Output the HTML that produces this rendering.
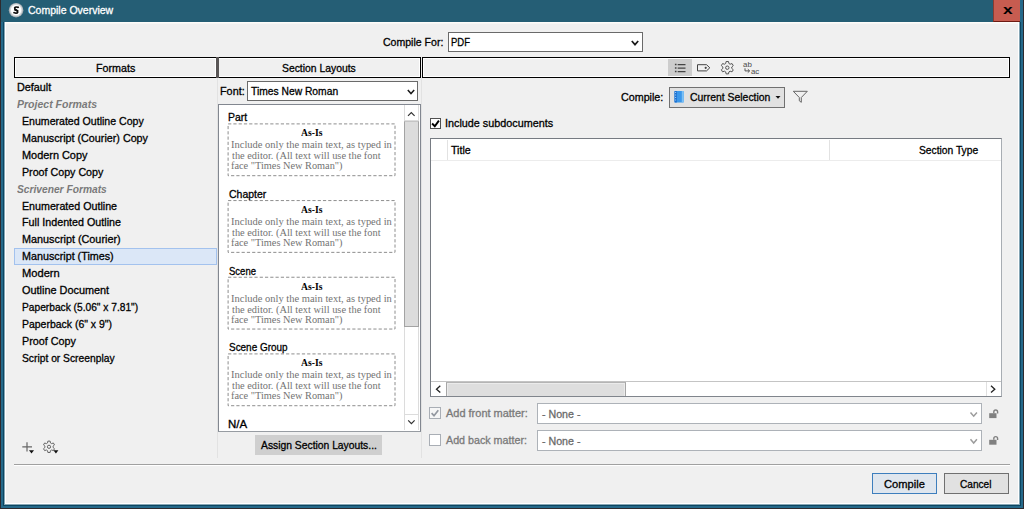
<!DOCTYPE html>
<html><head><meta charset="utf-8"><title>Compile Overview</title>
<style>
*{box-sizing:border-box;margin:0;padding:0}
html,body{width:1024px;height:509px;overflow:hidden}
body{position:relative;background:#f0f0f0;font-family:"Liberation Sans",sans-serif;font-size:12px;color:#000}
.a{position:absolute}
.t{position:absolute;white-space:nowrap;line-height:16px;height:16px;transform-origin:0 0;-webkit-text-stroke:0.3px}
#close{left:993px;top:0;width:27px;height:22px;background:#c75c50;border-bottom:1px solid #6e1a12;border-left:1px solid #8a3a30}
.hdr{top:57px;height:21px;border:1px solid #000;box-shadow:inset 1px 1px 0 #fff,inset -1px -1px 0 #fff;background:#f0f0f0}
.vsep{top:57px;width:2px;height:21px;background:#4d4a4a}
.combo{background:#fff;border:1px solid #6a6a6a}
.dash{border:1px dashed #a6a6a6}
</style></head><body>
<div class="a" style="left:0;top:0;width:1024px;height:22px;background:#255e75"></div>
<div class="a" style="left:5px;top:22px;width:1014px;height:1px;background:#fdfcfa"></div>
<div class="a" style="left:6px;top:23px;width:1012px;height:1px;background:#f7f6f4"></div>
<div class="a" style="left:0;top:22px;width:6px;height:487px;background:linear-gradient(90deg,#2e2a2e 0 1px,#25698a 1px 3px,#0c4661 3px 4px,#86a6b5 4px 5px,#fff 5px 6px)"></div>
<div class="a" style="left:1018px;top:22px;width:6px;height:487px;background:linear-gradient(270deg,#2e2a2e 0 1px,#25698a 1px 3px,#0c4661 3px 4px,#86a6b5 4px 5px,#fff 5px 6px)"></div>
<div class="a" style="left:5px;top:503px;width:1014px;height:1px;background:#fff"></div>
<div class="a" style="left:4px;top:504px;width:1016px;height:1px;background:#86a6b5"></div>
<div class="a" style="left:3px;top:505px;width:1018px;height:1px;background:#0c4661"></div>
<div class="a" style="left:1px;top:506px;width:1022px;height:2px;background:#25698a"></div>
<div class="a" style="left:0;top:508px;width:1024px;height:1px;background:#2e2a2e"></div>
<div class="a" style="left:0;top:0;width:1px;height:22px;background:#2e2a2e"></div>
<div class="a" style="left:1023px;top:0;width:1px;height:22px;background:#2e2a2e"></div>
<div class="a" style="left:1020px;top:0;width:3px;height:22px;background:#25698a"></div>
<!-- title bar -->
<svg class="a" style="left:8px;top:2px" width="17" height="17" viewBox="0 0 17 17"><circle cx="8.100" cy="8.200" r="7.300" fill="#9fa8ae"/><circle cx="8.100" cy="8.100" r="6.500" fill="#d3d7da"/><circle cx="8.100" cy="8" r="5.300" fill="#fff"/><g transform="translate(8.100 8.200) scale(.84) translate(-8.100 -8.200)"><path d="M11 5.400C10.400 4.100 7 3.900 6.300 5.400C5.600 7 10.700 8.700 10.100 10.500C9.600 12 6.300 12.100 5.300 10.500" fill="none" stroke="#0c0c0c" stroke-width="1.900"/><path d="M10.400 3.900l1 .3-.2 2.100zM5.800 12.200l-1-.3.200-2.100z" fill="#0c0c0c"/><path d="M5.800 7.300L10.600 9.200" stroke="#0c0c0c" stroke-width="2.200"/></g></svg>
<div class="a" id="close"></div>

<!-- compile for -->
<div class="a combo" style="left:448px;top:32px;width:195px;height:20px"></div>
<svg class="a" style="left:631.300px;top:39.700px" width="8" height="7" viewBox="0 0 8 7"><path d="M0.8 1 L4 4.600 L7.200 1" fill="none" stroke="#1a1a1a" stroke-width="1.700"/></svg>

<!-- headers -->
<div class="a hdr" style="left:14px;width:203px"></div>
<div class="a hdr" style="left:217px;width:204px"></div>
<div class="a hdr" style="left:422px;width:588px"></div>
<div class="a vsep" style="left:215.600px;width:3.200px;background:#595656"></div>
<!-- splitters -->
<div class="a" style="left:217px;top:78px;width:1px;height:380px;background:#e2e2e2"></div>
<div class="a" style="left:421px;top:78px;width:1px;height:380px;background:#e2e2e2"></div>

<!-- toolbar icons -->
<div class="a" style="left:668px;top:59px;width:24px;height:17px;background:#cdcdcd"></div>
<svg class="a" style="left:668px;top:58px" width="100" height="19" viewBox="668 58 100 19">
 <g stroke="#444" stroke-width="1.200" fill="none">
  <path d="M677.700 64.600H685.500M677.700 68.100H685.500M677.700 71.600H685.500"/>
  <path d="M674.900 64.600h1.600M674.900 68.100h1.600M674.900 71.600h1.600" stroke-width="1.500"/>
  <path d="M697.500 64.700H706.500L709.800 67.800L706.500 70.900H697.500Z" stroke-width="1"/>
  <circle cx="705.700" cy="67.800" r=".5" fill="#444"/>
 </g>
 <g stroke="#555" stroke-width="1" fill="none">
  <path d="M728.91 63.50 L728.50 61.52 L726.10 61.52 L725.69 63.50 L724.47 64.20 L722.55 63.57 L721.34 65.65 L722.86 67.00 L722.86 68.40 L721.34 69.75 L722.55 71.83 L724.47 71.20 L725.69 71.90 L726.10 73.88 L728.50 73.88 L728.91 71.90 L730.13 71.20 L732.05 71.83 L733.26 69.75 L731.74 68.40 L731.74 67.00 L733.26 65.65 L732.05 63.57 L730.13 64.20Z" stroke-linejoin="round"/>
  <circle cx="727.300" cy="67.700" r="1.700"/>
  <path d="M745 68.300v2.600h4.500M747.800 69.200l1.800 1.700-1.800 1.700"/>
 </g>
 <text x="743.100" y="66.500" font-family="Liberation Sans,sans-serif" font-size="7.500" fill="#4a4a4a" textLength="8.800" lengthAdjust="spacingAndGlyphs">ab</text>
 <text x="750.900" y="73.600" font-family="Liberation Sans,sans-serif" font-size="7.500" fill="#4a4a4a" textLength="8.300" lengthAdjust="spacingAndGlyphs">ac</text>
</svg>

<!-- formats list selection -->
<div class="a" style="left:14px;top:248px;width:203px;height:17px;background:#dbe7f7;border:1px solid #a3c2ee"></div>
<!-- plus / gear -->
<svg class="a" style="left:20px;top:438px" width="40" height="18" viewBox="20 438 40 18">
 <path d="M27 442.300v9.300M22.300 446.800h9.700" stroke="#666" stroke-width="1.200" fill="none"/>
 <path d="M29 450.300h5l-2.500 3.100z" fill="#111"/>
 <g stroke="#666" stroke-width="1" fill="none" stroke-linejoin="round"><path d="M50.47 442.97 L50.11 441.11 L47.89 441.11 L47.53 442.97 L46.42 443.61 L44.62 442.99 L43.52 444.91 L44.95 446.16 L44.95 447.44 L43.52 448.69 L44.62 450.61 L46.42 449.99 L47.53 450.63 L47.89 452.49 L50.11 452.49 L50.47 450.63 L51.58 449.99 L53.38 450.61 L54.48 448.69 L53.05 447.44 L53.05 446.16 L54.48 444.91 L53.38 442.99 L51.58 443.61Z"/><circle cx="49" cy="446.800" r="1.600"/></g>
 <path d="M53.400 450.300h5l-2.500 3.100z" fill="#111"/>
</svg>

<!-- section layouts -->
<div class="a combo" style="left:247px;top:81px;width:171px;height:20px"></div>
<svg class="a" style="left:406.700px;top:88.800px" width="8" height="7" viewBox="0 0 8 7"><path d="M0.8 1 L4 4.600 L7.200 1" fill="none" stroke="#1a1a1a" stroke-width="1.500"/></svg>
<div class="a" style="left:218px;top:104px;width:203px;height:327.500px;background:#fff;border:1px solid #828790;border-bottom-color:#979ca2"></div>
<!-- scrollbar -->
<div class="a" style="left:404px;top:105px;width:15px;height:325px;background:#fff;border-left:1px solid #dcdcdc;border-right:1px solid #dcdcdc"></div>
<div class="a" style="left:404px;top:120px;width:15px;height:1px;background:#dcdcdc"></div>
<div class="a" style="left:404px;top:414px;width:15px;height:1px;background:#dcdcdc"></div>
<div class="a" style="left:404px;top:121px;width:15px;height:206px;background:#dcdcdc;border:1px solid #a3a3a3;border-top-color:#c4c4c4"></div>
<svg class="a" style="left:404px;top:105px" width="16" height="325" viewBox="404 105 16 325"><path d="M408 115.800 L411.300 112.500 L414.600 115.800" fill="none" stroke="#333" stroke-width="1.200"/><path d="M408.200 420.300 L411.400 423.700 L414.600 420.300" fill="none" stroke="#333" stroke-width="1.200"/></svg>
<svg class="a" style="left:226px;top:120px" width="174" height="290" viewBox="226 120 174 290" fill="none" stroke="#8e8e8e" stroke-width="1" stroke-dasharray="3.200 2.070">
<rect x="228.100" y="123.90" width="166.900" height="51.800"/>
<rect x="228.100" y="200.57" width="166.900" height="51.800"/>
<rect x="228.100" y="277.24" width="166.900" height="51.800"/>
<rect x="228.100" y="353.91" width="166.900" height="51.800"/>
</svg>
<!-- assign button -->
<div class="a" style="left:255px;top:435px;width:127px;height:20px;background:#cfcfcf"></div>

<!-- right pane -->
<div class="a" style="left:669px;top:87px;width:116px;height:21px;background:#e1e1e1;border:1px solid #707070"></div>
<svg class="a" style="left:673px;top:90px" width="12" height="14" viewBox="673 90 12 14">
 <rect x="674.500" y="91" width="9.300" height="11.500" rx="1" fill="#3b97ea"/>
 <rect x="674.500" y="91" width="2.300" height="11.500" fill="#1b6fd0"/>
 <rect x="681.800" y="91" width="2" height="11.500" fill="#7cc0f5"/>
 <path d="M675.600 92v10" stroke="#cfe6fb" stroke-width=".8" stroke-dasharray="1 1.500"/>
</svg>
<svg class="a" style="left:775px;top:95px" width="6" height="5" viewBox="0 0 6 5"><path d="M.5 1h5L3 3.800z" fill="#111"/></svg>
<svg class="a" style="left:791px;top:89px" width="18" height="16" viewBox="791 89 18 16"><path d="M793.300 91.300H807.300L801.300 97.500V102.300L799.300 100.800V97.500Z" fill="none" stroke="#666" stroke-width="1"/></svg>
<!-- include subdocs checkbox -->
<div class="a" style="left:429.500px;top:117.500px;width:11.500px;height:11.500px;background:#fff;border:1px solid #505050"></div>
<svg class="a" style="left:429px;top:117px" width="13" height="13" viewBox="429 117 13 13"><path d="M432.100 123.500 L434.800 126.200 L438.900 120.600" fill="none" stroke="#000" stroke-width="1.900"/></svg>
<!-- table -->
<div class="a" style="left:429.600px;top:138px;width:572.200px;height:259.200px;background:#fff;border:1px solid #767b82;border-right-color:#a8adb3;border-bottom-color:#80858c"></div>
<div class="a" style="left:431px;top:160px;width:570px;height:1px;background:#ececec"></div>
<div class="a" style="left:447px;top:140px;width:1px;height:20px;background:#e2e2e2"></div>
<div class="a" style="left:829px;top:140px;width:1px;height:20px;background:#e2e2e2"></div>
<!-- hscroll -->
<div class="a" style="left:431px;top:381px;width:570px;height:1px;background:#c4c4c4"></div>
<div class="a" style="left:445.500px;top:382px;width:180.300px;height:14px;background:#dedede;border:1px solid #a6a6a6;border-top-color:#b4b4b4;border-bottom:0;box-shadow:inset 1px 1px 0 #ebebeb,inset -1px 0 0 #ebebeb"></div>
<div class="a" style="left:986px;top:382px;width:1px;height:14px;background:#e0e0e0"></div>
<svg class="a" style="left:431px;top:382px" width="570" height="14" viewBox="431 382 570 14"><path d="M440.300 385.800 L436.500 389.200 L440.300 392.500" fill="none" stroke="#222" stroke-width="1.300"/><path d="M991 385.800 L994.800 389.200 L991 392.500" fill="none" stroke="#222" stroke-width="1.300"/></svg>
<!-- front/back matter -->
<div class="a" style="left:429.400px;top:407.300px;width:11.800px;height:11.700px;background:#f6f6f6;border:1px solid #a9aeb5"></div>
<svg class="a" style="left:429.400px;top:406.800px" width="12" height="12" viewBox="0 0 12 12"><path d="M2.600 6.200 L5 8.700 L9.300 3.300" fill="none" stroke="#9398a0" stroke-width="1.700"/></svg>
<div class="a" style="left:429.400px;top:434.200px;width:11.800px;height:11.700px;background:#fff;border:1px solid #a9aeb5"></div>
<div class="a" style="left:537px;top:403px;width:444.500px;height:21px;background:#fff;border:1px solid #adb2b8"></div>
<div class="a" style="left:537px;top:430px;width:444.500px;height:21px;background:#fff;border:1px solid #adb2b8"></div>
<svg class="a" style="left:969px;top:403px" width="32" height="48" viewBox="969 403 32 48">
 <g fill="none" stroke="#9c9c9c" stroke-width="1.500"><path d="M970.500 412.500L973.700 416.200 L976.900 412.500"/><path d="M970.500 439.300L973.700 443 L976.900 439.300"/></g>
 <g fill="#808080"><rect x="989.200" y="413.200" width="7.300" height="4.900"/><rect x="989.200" y="439.800" width="7.300" height="4.900"/></g>
 <g fill="none" stroke="#808080" stroke-width="1.400"><path d="M993.800 413.200v-1.300a1.900 1.900 0 0 1 3.800 0v1.500"/><path d="M993.800 439.800v-1.300a1.900 1.900 0 0 1 3.800 0v1.500"/></g>
</svg>
<!-- bottom rule -->
<div class="a" style="left:14px;top:464px;width:996px;height:1px;background:#a0a0a0"></div>
<div class="a" style="left:14px;top:465px;width:996px;height:1px;background:#fff"></div>
<!-- buttons -->
<div class="a" style="left:872px;top:473px;width:65px;height:21px;background:#dfe6ee;border:1px solid #3d7ebd"></div>
<div class="a" style="left:944px;top:473px;width:65px;height:21px;background:#e1e1e1;border:1px solid #707070"></div>

<div class="t" style="left:27.90px;top:2px;transform:scaleX(0.9544);font-size:11px;color:#fff;font-family:'Liberation Sans',sans-serif;">Compile Overview</div>
<div class="t" style="left:1003.00px;top:2px;transform:scaleX(1.2857);font-size:13.5px;color:#000;font-family:'Liberation Sans',sans-serif;font-weight:bold;-webkit-text-stroke:0;">x</div>
<div class="t" style="left:382.80px;top:34px;transform:scaleX(0.9581);font-size:11px;color:#000;font-family:'Liberation Sans',sans-serif;">Compile For:</div>
<div class="t" style="left:451.34px;top:34px;transform:scaleX(0.8619);font-size:11px;color:#000;font-family:'Liberation Sans',sans-serif;">PDF</div>
<div class="t" style="left:95.53px;top:60px;transform:scaleX(0.9744);font-size:11px;color:#000;font-family:'Liberation Sans',sans-serif;">Formats</div>
<div class="t" style="left:281.80px;top:60px;transform:scaleX(0.9423);font-size:11px;color:#000;font-family:'Liberation Sans',sans-serif;">Section Layouts</div>
<div class="t" style="left:16.52px;top:79px;transform:scaleX(0.9824);font-size:11px;color:#000;font-family:'Liberation Sans',sans-serif;">Default</div>
<div class="t" style="left:16.90px;top:96px;transform:scaleX(0.9560);font-size:11px;color:#7a7a7a;font-family:'Liberation Sans',sans-serif;font-weight:bold;font-style:italic;-webkit-text-stroke:0;">Project Formats</div>
<div class="t" style="left:21.84px;top:113px;transform:scaleX(0.9619);font-size:11px;color:#000;font-family:'Liberation Sans',sans-serif;">Enumerated Outline Copy</div>
<div class="t" style="left:21.82px;top:130px;transform:scaleX(0.9766);font-size:11px;color:#000;font-family:'Liberation Sans',sans-serif;">Manuscript (Courier) Copy</div>
<div class="t" style="left:21.81px;top:147px;transform:scaleX(0.9908);font-size:11px;color:#000;font-family:'Liberation Sans',sans-serif;">Modern Copy</div>
<div class="t" style="left:21.83px;top:164px;transform:scaleX(0.9711);font-size:11px;color:#000;font-family:'Liberation Sans',sans-serif;">Proof Copy Copy</div>
<div class="t" style="left:16.90px;top:181px;transform:scaleX(0.9292);font-size:11px;color:#7a7a7a;font-family:'Liberation Sans',sans-serif;font-weight:bold;font-style:italic;-webkit-text-stroke:0;">Scrivener Formats</div>
<div class="t" style="left:21.83px;top:198px;transform:scaleX(0.9711);font-size:11px;color:#000;font-family:'Liberation Sans',sans-serif;">Enumerated Outline</div>
<div class="t" style="left:21.83px;top:214px;transform:scaleX(0.9748);font-size:11px;color:#000;font-family:'Liberation Sans',sans-serif;">Full Indented Outline</div>
<div class="t" style="left:21.82px;top:231px;transform:scaleX(0.9838);font-size:11px;color:#000;font-family:'Liberation Sans',sans-serif;">Manuscript (Courier)</div>
<div class="t" style="left:21.82px;top:248px;transform:scaleX(0.9783);font-size:11px;color:#000;font-family:'Liberation Sans',sans-serif;">Manuscript (Times)</div>
<div class="t" style="left:21.79px;top:265px;transform:scaleX(1.0111);font-size:11px;color:#000;font-family:'Liberation Sans',sans-serif;">Modern</div>
<div class="t" style="left:22.30px;top:282px;transform:scaleX(0.9898);font-size:11px;color:#000;font-family:'Liberation Sans',sans-serif;">Outline Document</div>
<div class="t" style="left:21.87px;top:299px;transform:scaleX(0.9274);font-size:11px;color:#000;font-family:'Liberation Sans',sans-serif;">Paperback (5.06&quot; x 7.81&quot;)</div>
<div class="t" style="left:21.85px;top:316px;transform:scaleX(0.9511);font-size:11px;color:#000;font-family:'Liberation Sans',sans-serif;">Paperback (6&quot; x 9&quot;)</div>
<div class="t" style="left:21.82px;top:333px;transform:scaleX(0.9778);font-size:11px;color:#000;font-family:'Liberation Sans',sans-serif;">Proof Copy</div>
<div class="t" style="left:22.20px;top:350px;transform:scaleX(0.9343);font-size:11px;color:#000;font-family:'Liberation Sans',sans-serif;">Script or Screenplay</div>
<div class="t" style="left:219.77px;top:83px;transform:scaleX(0.9848);font-size:11px;color:#000;font-family:'Liberation Sans',sans-serif;">Font:</div>
<div class="t" style="left:251.20px;top:83px;transform:scaleX(0.9355);font-size:11px;color:#000;font-family:'Liberation Sans',sans-serif;">Times New Roman</div>
<div class="t" style="left:260.70px;top:437px;transform:scaleX(0.9382);font-size:11px;color:#000;font-family:'Liberation Sans',sans-serif;">Assign Section Layouts...</div>
<div class="t" style="left:620.70px;top:89.4px;transform:scaleX(0.9744);font-size:11px;color:#000;font-family:'Liberation Sans',sans-serif;">Compile:</div>
<div class="t" style="left:690.10px;top:89.4px;transform:scaleX(0.9459);font-size:11px;color:#000;font-family:'Liberation Sans',sans-serif;">Current Selection</div>
<div class="t" style="left:445.22px;top:115px;transform:scaleX(0.9826);font-size:11px;color:#000;font-family:'Liberation Sans',sans-serif;">Include subdocuments</div>
<div class="t" style="left:451.20px;top:142px;transform:scaleX(0.9700);font-size:11px;color:#000;font-family:'Liberation Sans',sans-serif;">Title</div>
<div class="t" style="left:918.90px;top:142px;transform:scaleX(0.9333);font-size:11px;color:#000;font-family:'Liberation Sans',sans-serif;">Section Type</div>
<div class="t" style="left:446.40px;top:405px;transform:scaleX(0.9975);font-size:11px;color:#7a7a7a;font-family:'Liberation Sans',sans-serif;">Add front matter:</div>
<div class="t" style="left:541.60px;top:406px;transform:scaleX(0.9675);font-size:11px;color:#6a6a6a;font-family:'Liberation Sans',sans-serif;">- None -</div>
<div class="t" style="left:446.40px;top:432px;transform:scaleX(0.9732);font-size:11px;color:#7a7a7a;font-family:'Liberation Sans',sans-serif;">Add back matter:</div>
<div class="t" style="left:541.60px;top:433px;transform:scaleX(0.9675);font-size:11px;color:#6a6a6a;font-family:'Liberation Sans',sans-serif;">- None -</div>
<div class="t" style="left:884.25px;top:476px;transform:scaleX(1.0125);font-size:11px;color:#000;font-family:'Liberation Sans',sans-serif;">Compile</div>
<div class="t" style="left:960.00px;top:476px;transform:scaleX(0.9191);font-size:11px;color:#000;font-family:'Liberation Sans',sans-serif;">Cancel</div>
<div class="t" style="left:227.85px;top:109px;transform:scaleX(0.9474);font-size:11px;color:#000;font-family:'Liberation Sans',sans-serif;">Part</div>
<div class="t" style="left:300.80px;top:125px;transform:scaleX(0.9636);font-size:10px;color:#000;font-family:'Liberation Serif',serif;font-weight:bold;-webkit-text-stroke:0;">As-Is</div>
<div class="t" style="left:231.10px;top:137px;transform:scaleX(1.1042);font-size:9.5px;color:#737373;font-family:'Liberation Serif',serif;-webkit-text-stroke:0;">Include only the main text, as typed in</div>
<div class="t" style="left:232.00px;top:148px;transform:scaleX(1.0912);font-size:9.5px;color:#737373;font-family:'Liberation Serif',serif;-webkit-text-stroke:0;">the editor. (All text will use the font</div>
<div class="t" style="left:230.91px;top:158px;transform:scaleX(1.0861);font-size:9.5px;color:#737373;font-family:'Liberation Serif',serif;-webkit-text-stroke:0;">face &quot;Times New Roman&quot;)</div>
<div class="t" style="left:228.80px;top:186px;transform:scaleX(0.9513);font-size:11px;color:#000;font-family:'Liberation Sans',sans-serif;">Chapter</div>
<div class="t" style="left:300.80px;top:202px;transform:scaleX(0.9636);font-size:10px;color:#000;font-family:'Liberation Serif',serif;font-weight:bold;-webkit-text-stroke:0;">As-Is</div>
<div class="t" style="left:231.10px;top:214px;transform:scaleX(1.1042);font-size:9.5px;color:#737373;font-family:'Liberation Serif',serif;-webkit-text-stroke:0;">Include only the main text, as typed in</div>
<div class="t" style="left:232.00px;top:225px;transform:scaleX(1.0912);font-size:9.5px;color:#737373;font-family:'Liberation Serif',serif;-webkit-text-stroke:0;">the editor. (All text will use the font</div>
<div class="t" style="left:230.91px;top:235px;transform:scaleX(1.0861);font-size:9.5px;color:#737373;font-family:'Liberation Serif',serif;-webkit-text-stroke:0;">face &quot;Times New Roman&quot;)</div>
<div class="t" style="left:228.80px;top:263px;transform:scaleX(0.8645);font-size:11px;color:#000;font-family:'Liberation Sans',sans-serif;">Scene</div>
<div class="t" style="left:300.80px;top:279px;transform:scaleX(0.9636);font-size:10px;color:#000;font-family:'Liberation Serif',serif;font-weight:bold;-webkit-text-stroke:0;">As-Is</div>
<div class="t" style="left:231.10px;top:291px;transform:scaleX(1.1042);font-size:9.5px;color:#737373;font-family:'Liberation Serif',serif;-webkit-text-stroke:0;">Include only the main text, as typed in</div>
<div class="t" style="left:232.00px;top:302px;transform:scaleX(1.0912);font-size:9.5px;color:#737373;font-family:'Liberation Serif',serif;-webkit-text-stroke:0;">the editor. (All text will use the font</div>
<div class="t" style="left:230.91px;top:312px;transform:scaleX(1.0861);font-size:9.5px;color:#737373;font-family:'Liberation Serif',serif;-webkit-text-stroke:0;">face &quot;Times New Roman&quot;)</div>
<div class="t" style="left:228.80px;top:339px;transform:scaleX(0.9031);font-size:11px;color:#000;font-family:'Liberation Sans',sans-serif;">Scene Group</div>
<div class="t" style="left:300.80px;top:355px;transform:scaleX(0.9636);font-size:10px;color:#000;font-family:'Liberation Serif',serif;font-weight:bold;-webkit-text-stroke:0;">As-Is</div>
<div class="t" style="left:231.10px;top:367px;transform:scaleX(1.1042);font-size:9.5px;color:#737373;font-family:'Liberation Serif',serif;-webkit-text-stroke:0;">Include only the main text, as typed in</div>
<div class="t" style="left:232.00px;top:378px;transform:scaleX(1.0912);font-size:9.5px;color:#737373;font-family:'Liberation Serif',serif;-webkit-text-stroke:0;">the editor. (All text will use the font</div>
<div class="t" style="left:230.91px;top:388px;transform:scaleX(1.0861);font-size:9.5px;color:#737373;font-family:'Liberation Serif',serif;-webkit-text-stroke:0;">face &quot;Times New Roman&quot;)</div>
<div class="t" style="left:227.76px;top:416px;transform:scaleX(1.0444);font-size:11px;color:#000;font-family:'Liberation Sans',sans-serif;">N/A</div>
</body></html>
